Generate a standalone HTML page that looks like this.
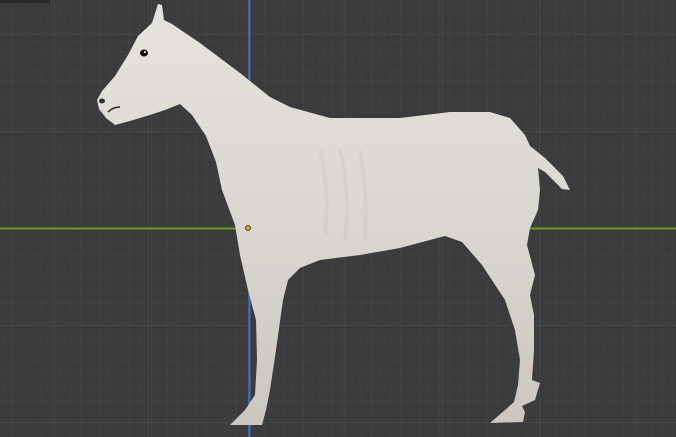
<!DOCTYPE html>
<html><head><style>
html,body{margin:0;padding:0;width:676px;height:437px;overflow:hidden;background:#3b3b3b}
</style></head><body>
<svg width="676" height="437" viewBox="0 0 676 437" xmlns="http://www.w3.org/2000/svg">
<defs>
<pattern id="minor" x="3" y="3" width="9.7" height="9.7" patternUnits="userSpaceOnUse">
<path d="M9.7 0V9.7M0 9.7H9.7" stroke="#444" stroke-width="1" fill="none"/>
</pattern>
<pattern id="major" x="54" y="34" width="97" height="97" patternUnits="userSpaceOnUse">
<path d="M0 0V97M0 0H97" stroke="#4f4f4f" stroke-width="1" fill="none"/>
</pattern>
<linearGradient id="body" x1="0" y1="0" x2="0" y2="1">
<stop offset="0" stop-color="#e6e3df"/><stop offset="0.6" stop-color="#d8d4cf"/><stop offset="1" stop-color="#cbc6c0"/>
</linearGradient>
</defs>
<rect width="676" height="437" fill="#3b3b3b"/>
<rect width="676" height="437" fill="url(#minor)"/>
<rect width="676" height="437" fill="url(#major)"/>
<rect x="0" y="0" width="50" height="3" fill="#2a2a2a"/>
<line x1="0" y1="228.5" x2="676" y2="228.5" stroke="#6f9a2a" stroke-width="2"/>
<line x1="249.5" y1="0" x2="249.5" y2="437" stroke="#3f6fd0" stroke-width="2"/>
<path fill="url(#body)" d="M158 4 L162 5 L164 20 L172 24 L200 43 L240 73 L270 97 L290 107 L330 118 L400 118 L450 112 L490 112 L510 118 L525 135 L530 146 L545 158 L563 176 L570 190 L562 189 L545 172 L538 168 L540 190 L538 210 L530 228 L527 245 L535 275 L530 295 L534 315 L534 350 L532 380 L540 383 L535 400 L522 406 L525 412 L523 422 L490 423 L505 410 L514 402 L518 385 L520 360 L515 330 L505 300 L482 265 L462 242 L445 236 L400 248 L360 255 L320 260 L300 268 L288 280 L283 300 L276 350 L270 390 L266 410 L262 425 L230 425 L245 410 L255 395 L257 360 L256 320 L248 290 L240 255 L235 225 L222 190 L216 162 L206 136 L192 115 L180 104 L165 110 L150 115 L130 121 L115 125 L106 118 L99 109 L97 100 L102 91 L115 76 L128 55 L138 36 L152 23 Z"/>
<path d="M320 150 Q330 190 325 235 M340 150 Q350 190 345 240 M360 150 Q368 190 365 240" stroke="#c8c3bd" stroke-width="4" fill="none" opacity="0.35"/>
<ellipse cx="144" cy="53" rx="4" ry="3.5" fill="#111"/>
<circle cx="145" cy="52" r="1" fill="#fff"/>
<ellipse cx="102" cy="101" rx="3" ry="2.5" fill="#333"/>
<path d="M108 112 Q113 107 120 107" stroke="#222" stroke-width="1.5" fill="none"/>
<circle cx="248" cy="228" r="2.5" fill="#e8a020" stroke="#222" stroke-width="0.8"/>
</svg>
</body></html>
